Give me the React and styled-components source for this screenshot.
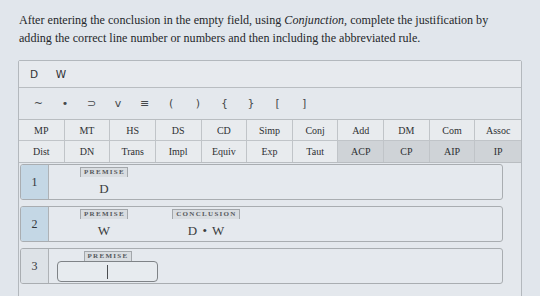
import React from 'react';
import styled, { createGlobalStyle } from 'styled-components';

const GlobalStyle = createGlobalStyle`
	body {
		margin: 0;
		background: #e1e6ec;
		font-family: 'Liberation Serif', 'Times New Roman', serif;
		color: #2b2d30;
	}
`;

const variables = ['D', 'W'];
const symbols = ['~', '•', '⊃', 'v', '≡', '(', ')', '{', '}', '[', ']'];
const rulesTop = ['MP', 'MT', 'HS', 'DS', 'CD', 'Simp', 'Conj', 'Add', 'DM', 'Com', 'Assoc'];
const rulesBottom = ['Dist', 'DN', 'Trans', 'Impl', 'Equiv', 'Exp', 'Taut', 'ACP', 'CP', 'AIP', 'IP'];
const assumptionRules = ['ACP', 'CP', 'AIP', 'IP'];

const lines = [
	{ n: 1, given: true, fields: [{ label: 'PREMISE', value: 'D' }] },
	{
		n: 2,
		given: true,
		fields: [
			{ label: 'PREMISE', value: 'W' },
			{ label: 'CONCLUSION', value: 'D • W' }
		]
	},
	{ n: 3, given: false, fields: [{ label: 'PREMISE', input: true }] }
];

const App = () => (
	<Page>
		<GlobalStyle />
		<Instructions>
			After entering the conclusion in the empty field, using <em>Conjunction,</em> complete the justification by
			<br />
			adding the correct line number or numbers and then including the abbreviated rule.
		</Instructions>
		<Panel>
			<VarRow>
				{variables.map(v => (
					<VarKey key={v}>{v}</VarKey>
				))}
			</VarRow>
			<SymbolRow>
				{symbols.map(s => (
					<SymbolKey key={s}>{s}</SymbolKey>
				))}
			</SymbolRow>
			<RuleGrid>
				{rulesTop.map(r => (
					<RuleCell key={r}>{r}</RuleCell>
				))}
				{rulesBottom.map(r => (
					<RuleCell key={r} $dark={assumptionRules.includes(r)}>
						{r}
					</RuleCell>
				))}
			</RuleGrid>
			<Lines>
				{lines.map(line => (
					<Line key={line.n}>
						<LineNumber $given={line.given}>{line.n}</LineNumber>
						<LineBody>
							{line.fields.map(f => (
								<Field key={f.label} $wide={f.input}>
									<FieldLabel>{f.label}</FieldLabel>
									{f.input ? (
										<InputBox>
											<Caret />
										</InputBox>
									) : (
										<FieldValue>{f.value}</FieldValue>
									)}
								</Field>
							))}
						</LineBody>
					</Line>
				))}
			</Lines>
		</Panel>
	</Page>
);

const Page = styled.div`
	width: 540px;
	height: 296px;
	overflow: hidden;
`;

const Instructions = styled.p`
	margin: 0;
	padding: 11px 0 0 19px;
	font-size: 12.1px;
	line-height: 18px;
	white-space: nowrap;
	color: #26282b;
	em {
		font-style: italic;
	}
`;

const Panel = styled.div`
	margin: 13px 0 0 18px;
	width: 502px;
	height: 260px;
	border: 1px solid #b3b8bd;
	border-radius: 2px;
	background: #e4e8ed;
`;

const VarRow = styled.div`
	display: flex;
	align-items: center;
	height: 26px;
	padding-left: 7px;
	gap: 11px;
	border-bottom: 1px solid #b9bdc1;
	background: #e7eaee;
`;

const VarKey = styled.span`
	font-family: 'DejaVu Sans', sans-serif;
	font-size: 10.5px;
	color: #2f3133;
	width: 16px;
	text-align: center;
`;

const SymbolRow = styled.div`
	display: flex;
	align-items: center;
	height: 31px;
	padding-left: 6px;
	border-bottom: 1px solid #b9bdc1;
`;

const SymbolKey = styled.span`
	width: 26.6px;
	text-align: center;
	font-family: 'DejaVu Sans', sans-serif;
	font-size: 11px;
	color: #45484b;
`;

const RuleGrid = styled.div`
	display: grid;
	grid-template-columns: repeat(11, 1fr);
	grid-auto-rows: 21px;
	border-bottom: 1px solid #b9bdc1;
`;

const RuleCell = styled.div`
	display: flex;
	align-items: center;
	justify-content: center;
	font-size: 10px;
	color: #2e3033;
	background: ${p => (p.$dark ? '#cfd3d7' : '#e8ebee')};
	border-right: 1px solid #c0c4c8;
	border-bottom: 1px solid #c0c4c8;
	&:nth-child(11n) {
		border-right: none;
	}
	&:nth-child(n + 12) {
		border-bottom: none;
	}
`;

const Lines = styled.div`
	display: flex;
	flex-direction: column;
	gap: 6px;
	padding: 1px 0 0 1px;
	width: 483px;
`;

const Line = styled.div`
	display: flex;
	height: 34px;
	border: 1px solid #a9adb1;
	border-radius: 3px;
	overflow: hidden;
	background: #e5e9ee;
`;

const LineNumber = styled.div`
	display: flex;
	align-items: center;
	justify-content: center;
	width: 27px;
	flex-shrink: 0;
	font-size: 12px;
	color: #33363a;
	background: ${p => (p.$given ? '#c4d7e5' : '#dde2e7')};
	border-right: 1px solid #aeb2b6;
`;

const LineBody = styled.div`
	display: flex;
	gap: 10px;
	padding: 2px 0 0 8px;
`;

const Field = styled.div`
	display: flex;
	flex-direction: column;
	align-items: center;
	width: ${p => (p.$wide ? '101px' : '90px')};
	margin-left: ${p => (p.$wide ? '0' : '2px')};
`;

const FieldLabel = styled.span`
	padding: 0 2px 0 3px;
	height: 9px;
	line-height: 9px;
	font-size: 7px;
	font-weight: bold;
	letter-spacing: 1.3px;
	color: #55585c;
	background: #d9dde1;
	border: 1px solid #a3a7ab;
	border-bottom: none;
`;

const FieldValue = styled.span`
	margin-top: 4px;
	font-size: 13px;
	color: #3a3d40;
	word-spacing: 2px;
`;

const InputBox = styled.div`
	display: flex;
	align-items: center;
	justify-content: center;
	width: 101px;
	height: 21px;
	box-sizing: border-box;
	border: 1.5px solid #7f8387;
	border-radius: 4px;
	background: #e7ebef;
`;

const Caret = styled.span`
	width: 1px;
	height: 14px;
	background: #4a4d50;
`;

export default App;
